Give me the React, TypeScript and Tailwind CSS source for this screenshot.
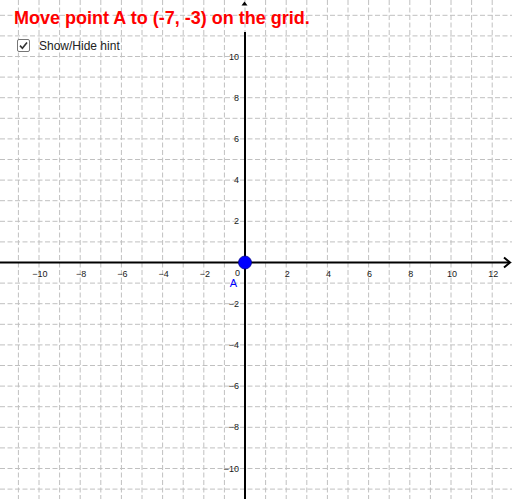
const OX = 245;
const OY = 262.5;
const U = 20.6;

const xs = Array.from({ length: 24 }, (_, i) => i - 11); // -11..12
const ys = Array.from({ length: 24 }, (_, i) => i - 12); // -12..11

const xLabels = [-10, -8, -6, -4, -2, 2, 4, 6, 8, 10, 12];
const yLabels = [10, 8, 6, 4, 2, -2, -4, -6, -8, -10];

const fmt = (n: number) => (n < 0 ? `\u2212${-n}` : `${n}`);

function Graph() {
  return (
    <svg width={512} height={499} className="absolute inset-0" viewBox="0 0 512 499">
      {/* grid */}
      <g stroke="#c0c0c0" strokeWidth={1} strokeDasharray="5 2.5">
        {xs.map((k) => (
          <line key={`v${k}`} x1={OX + k * U} y1={0} x2={OX + k * U} y2={499} />
        ))}
        {ys.map((k) => (
          <line key={`h${k}`} x1={0} y1={OY + k * U} x2={512} y2={OY + k * U} />
        ))}
      </g>

      {/* axes */}
      <line x1={0} y1={OY} x2={509} y2={OY} stroke="#000" strokeWidth={2} />
      <path d="M504 257.5 L510 262.5 L504 267.5" fill="none" stroke="#000" strokeWidth={2} />
      <line x1={OX} y1={32} x2={OX} y2={499} stroke="#000" strokeWidth={2} />
      <polygon points="241.5,5.5 244.5,1.5 247.5,5.5" fill="#000" />

      {/* labels */}
      <g fontSize={9} fill="#1a1a1a">
        {xLabels.map((n) => (
          <text key={`xl${n}`} x={OX + n * U + 1} y={277} textAnchor="middle">
            {fmt(n)}
          </text>
        ))}
        {yLabels.map((n) => (
          <text key={`yl${n}`} x={239} y={OY - n * U + 3} textAnchor="end">
            {fmt(n)}
          </text>
        ))}
        <text x={237.5} y={276} textAnchor="middle">
          0
        </text>
      </g>

      {/* point A */}
      <text x={233.5} y={286.5} fontSize={11} fill="#0000ff" textAnchor="middle">
        A
      </text>
      <circle cx={OX} cy={OY} r={6.5} fill="#0000ff" stroke="#00008a" strokeWidth={0.8} />
    </svg>
  );
}

export default function App() {
  return (
    <div className="relative w-[512px] h-[499px] bg-white overflow-hidden font-['Liberation_Sans',Arial,sans-serif]">
      <Graph />

      <div className="absolute left-[14px] top-[9px] text-[18px] leading-none font-bold text-[#ff0000] whitespace-nowrap">
        Move point A to (-7, -3) on the grid.
      </div>

      <label className="absolute left-[17px] top-[39px] flex items-center gap-[9px] text-[12px] leading-none text-[#222]">
        <span className="w-[13px] h-[13px] rounded-[2px] border border-[#767676] bg-white flex items-center justify-center">
          <svg width={11} height={11} viewBox="0 0 11 11">
            <path d="M2 5.6 L4.4 8.2 L9 2.6" fill="none" stroke="#333" strokeWidth={1.6} />
          </svg>
        </span>
        <span>Show/Hide hint</span>
      </label>
    </div>
  );
}
